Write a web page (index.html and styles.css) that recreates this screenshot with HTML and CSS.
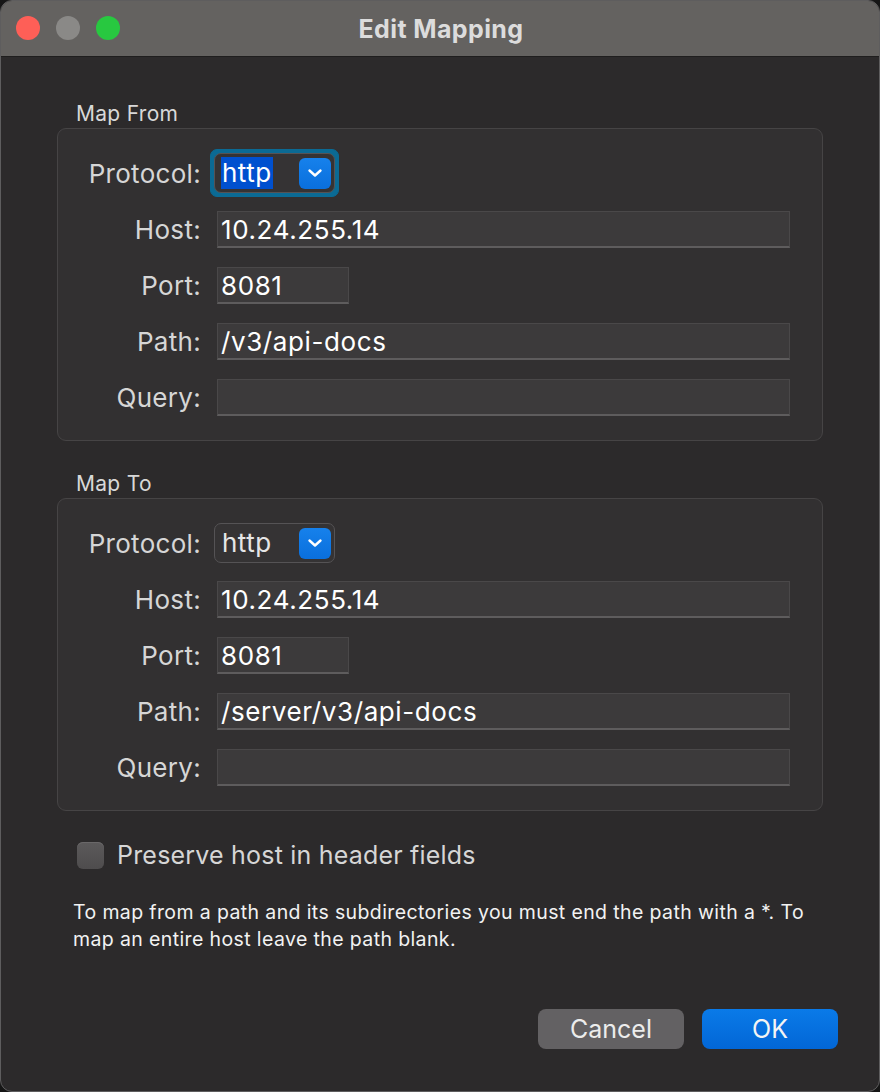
FILE: index.html
```html
<!DOCTYPE html>
<html>
<head>
<meta charset="utf-8">
<link rel="stylesheet" href="styles.css">
</head>
<body>
<div class="window">
  <div class="titlebar">
    <div class="lights">
      <span class="light red"></span>
      <span class="light gray"></span>
      <span class="light green"></span>
    </div>
    <div class="title">Edit Mapping</div>
  </div>
  <div class="content">
    <div class="group-label">Map From</div>
    <div class="group">
      <div class="row">
        <div class="label">Protocol:</div>
        <div class="popup-ring">
          <div class="popup">
            <span class="popup-text selected">http</span>
            <span class="popup-btn"><svg width="16" height="10" viewBox="0 0 16 10"><path d="M2.5 2.5 L8 7.5 L13.5 2.5" fill="none" stroke="#fff" stroke-width="2.4" stroke-linecap="round" stroke-linejoin="round"/></svg></span>
          </div>
        </div>
      </div>
      <div class="row"><div class="label">Host:</div><div class="field">10.24.255.14</div></div>
      <div class="row"><div class="label">Port:</div><div class="field short">8081</div></div>
      <div class="row"><div class="label">Path:</div><div class="field">/v3/api-docs</div></div>
      <div class="row"><div class="label">Query:</div><div class="field"></div></div>
    </div>

    <div class="group-label second">Map To</div>
    <div class="group">
      <div class="row">
        <div class="label">Protocol:</div>
        <div class="popup-ring plain">
          <div class="popup">
            <span class="popup-text">http</span>
            <span class="popup-btn"><svg width="16" height="10" viewBox="0 0 16 10"><path d="M2.5 2.5 L8 7.5 L13.5 2.5" fill="none" stroke="#fff" stroke-width="2.4" stroke-linecap="round" stroke-linejoin="round"/></svg></span>
          </div>
        </div>
      </div>
      <div class="row"><div class="label">Host:</div><div class="field">10.24.255.14</div></div>
      <div class="row"><div class="label">Port:</div><div class="field short">8081</div></div>
      <div class="row"><div class="label">Path:</div><div class="field">/server/v3/api-docs</div></div>
      <div class="row"><div class="label">Query:</div><div class="field"></div></div>
    </div>

    <div class="check-row">
      <span class="checkbox"></span>
      <span class="check-label">Preserve host in header fields</span>
    </div>

    <p class="note">To map from a path and its subdirectories you must end the path with a *. To map an entire host leave the path blank.</p>

    <div class="buttons">
      <div class="btn cancel">Cancel</div>
      <div class="btn ok">OK</div>
    </div>
  </div>
</div>
</body>
</html>
```
FILE: styles.css
```css
html, body {
  margin: 0;
  padding: 0;
  background: #161616;
}
body {
  width: 880px;
  height: 1092px;
  font-family: Inter, "Noto Sans", "Liberation Sans", sans-serif;
}
.window {
  box-sizing: border-box;
  width: 880px;
  height: 1092px;
  border: 1px solid #5e5d5e;
  border-radius: 12px;
  overflow: hidden;
  background: #2c2a2b;
  display: flex;
  flex-direction: column;
}
.titlebar {
  height: 55px;
  flex: none;
  background: #646260;
  border-bottom: 1px solid #1f1e1e;
  position: relative;
  display: flex;
  align-items: center;
  justify-content: center;
}
.lights {
  position: absolute;
  left: 15px;
  top: 15px;
  display: flex;
  gap: 16px;
}
.light {
  width: 24px;
  height: 24px;
  border-radius: 50%;
  display: block;
}
.red { background: #fe5f57; }
.gray { background: #8a8987; }
.green { background: #28c840; }
.title {
  color: #dcdcdc;
  font-weight: 700;
  font-size: 25px;
  letter-spacing: 0.4px;
  margin-left: 2px;
}
.content {
  flex: 1;
  padding: 47px 41px 0 56px;
  display: flex;
  flex-direction: column;
}
.group-label {
  color: #d8d8d8;
  font-size: 21px;
  letter-spacing: 0.3px;
  line-height: 20px;
  height: 20px;
  padding-left: 19px;
  margin-bottom: 4px;
}
.group-label.second {
  margin-top: 33px;
}
.group {
  box-sizing: border-box;
  width: 766px;
  height: 313px;
  background: #323031;
  border: 1px solid #464445;
  border-radius: 9px;
  padding: 16px 32px 0 0;
  display: flex;
  flex-direction: column;
}
.row {
  height: 56px;
  display: flex;
  align-items: center;
}
.label {
  width: 143px;
  text-align: right;
  color: #d6d6d6;
  font-size: 26px;
  letter-spacing: 0.3px;
  margin-right: 16px;
  flex: none;
}
.field {
  box-sizing: border-box;
  flex: 1;
  height: 37px;
  background: #3c3a3b;
  border: 1px solid #4a4849;
  border-bottom: 2px solid #5e5c5d;
  color: #ffffff;
  font-size: 26px;
  letter-spacing: 0.6px;
  line-height: 35px;
  padding-left: 3px;
}
.field.short {
  flex: none;
  width: 132px;
}
.popup-ring {
  margin-left: -7px;
  padding: 3px;
  border-radius: 7px;
  background: #0b6a94;
  border: 1px solid #0b6a94;
}
.popup-ring.plain {
  background: transparent;
  border-color: transparent;
}
.popup {
  box-sizing: border-box;
  width: 121px;
  height: 40px;
  border: 1px solid #555355;
  border-radius: 7px;
  background: #353334;
  display: flex;
  align-items: center;
  justify-content: space-between;
  padding: 0 3px 0 6px;
}
.popup-text {
  color: #e6e6e6;
  font-size: 26px;
  letter-spacing: 0.5px;
  line-height: 32px;
  padding: 0 1px;
}
.popup-text.selected {
  background: #0050cf;
  color: #ffffff;
}
.popup-btn {
  width: 32px;
  height: 31px;
  border-radius: 6px;
  background: linear-gradient(#1681ec, #0a6fdc);
  display: flex;
  align-items: center;
  justify-content: center;
}
.check-row {
  display: flex;
  align-items: center;
  margin-top: 30px;
  padding-left: 20px;
  height: 28px;
}
.checkbox {
  width: 27px;
  height: 27px;
  border-radius: 6px;
  background: linear-gradient(#5c5a5b, #4e4c4d);
  box-shadow: inset 0 1px 0 #6a6869;
  margin-right: 13px;
  flex: none;
}
.check-label {
  color: #d6d6d6;
  font-size: 25px;
  letter-spacing: 0.2px;
}
.note {
  margin: 30px 0 0 16px;
  color: #f2f2f2;
  font-size: 19.5px;
  letter-spacing: 0.38px;
  line-height: 27px;
  width: 750px;
}
.buttons {
  margin-top: auto;
  margin-bottom: 42px;
  display: flex;
  justify-content: flex-end;
  gap: 18px;
}
.btn {
  height: 40px;
  border-radius: 8px;
  color: #ececec;
  font-size: 25px;
  line-height: 40px;
  text-align: center;
}
.cancel {
  width: 146px;
  background: #636163;
}
.ok {
  width: 136px;
  background: linear-gradient(#0a7ae8, #0266d6);
  color: #f4f4f4;
}
```
